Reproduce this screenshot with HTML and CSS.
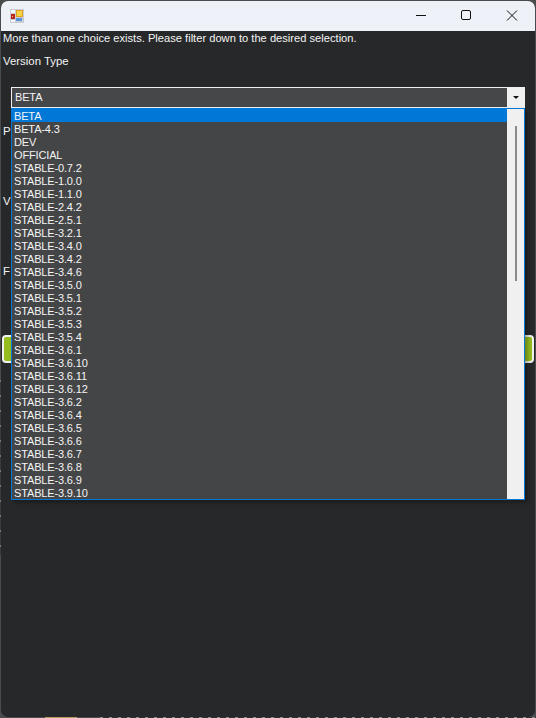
FILE: index.html
```html
<!DOCTYPE html>
<html lang="en">
  <head>
    <meta charset="UTF-8" />
    <title>Choose Version</title>
    <link rel="stylesheet" href="styles.css">
  </head>
  <body>
    <div class="window">
      <header class="title-bar">
        <svg class="app-icon" width="14" height="14" viewBox="0 0 14 14">
          <rect x="0" y="0" width="14" height="14" fill="#c9ccd3"/>
          <rect x="1" y="1" width="4" height="3" fill="#f6f6f8"/>
          <rect x="1" y="11" width="4" height="2" fill="#f6f6f8"/>
          <rect x="1" y="5" width="4" height="5" fill="#b8261d"/>
          <rect x="2" y="7" width="1" height="1" fill="#f0c0a0"/>
          <rect x="6" y="1" width="7" height="7" fill="#e0a020"/>
          <rect x="7" y="2" width="5" height="5" fill="#f8d248"/>
          <rect x="6" y="9" width="6" height="3" fill="#5a94da"/>
        </svg>
        <div class="window-controls">
          <svg class="control" width="46" height="30" viewBox="0 0 46 30"><path d="M19 14.5h10" stroke="#111" fill="none"/></svg>
          <svg class="control" width="46" height="30" viewBox="0 0 46 30"><rect x="18.5" y="9.5" width="9" height="9" rx="1.5" stroke="#111" fill="none"/></svg>
          <svg class="control" width="46" height="30" viewBox="0 0 46 30"><path d="M18 9.5l10 10M28 9.5l-10 10" stroke="#111" fill="none"/></svg>
        </div>
      </header>

      <main class="content">
        <p class="message">More than one choice exists. Please filter down to the desired selection.</p>
        <label class="field-label version-type">Version Type</label>

        <div class="combo">
          <span class="combo-value">BETA</span>
          <span class="combo-button"><span class="combo-arrow"></span></span>
        </div>

        <label class="field-label platform">P</label>
        <label class="field-label vehicle">V</label>
        <label class="field-label firmware">F</label>
        <div class="select-button"></div>

        <div class="dropdown">
          <ul class="dropdown-list">
            <li class="selected">BETA</li>
            <li>BETA-4.3</li>
            <li>DEV</li>
            <li>OFFICIAL</li>
            <li>STABLE-0.7.2</li>
            <li>STABLE-1.0.0</li>
            <li>STABLE-1.1.0</li>
            <li>STABLE-2.4.2</li>
            <li>STABLE-2.5.1</li>
            <li>STABLE-3.2.1</li>
            <li>STABLE-3.4.0</li>
            <li>STABLE-3.4.2</li>
            <li>STABLE-3.4.6</li>
            <li>STABLE-3.5.0</li>
            <li>STABLE-3.5.1</li>
            <li>STABLE-3.5.2</li>
            <li>STABLE-3.5.3</li>
            <li>STABLE-3.5.4</li>
            <li>STABLE-3.6.1</li>
            <li>STABLE-3.6.10</li>
            <li>STABLE-3.6.11</li>
            <li>STABLE-3.6.12</li>
            <li>STABLE-3.6.2</li>
            <li>STABLE-3.6.4</li>
            <li>STABLE-3.6.5</li>
            <li>STABLE-3.6.6</li>
            <li>STABLE-3.6.7</li>
            <li>STABLE-3.6.8</li>
            <li>STABLE-3.6.9</li>
            <li>STABLE-3.9.10</li>
          </ul>
          <div class="scrollbar"><div class="scroll-thumb"></div></div>
        </div>
      </main>
    </div>
  </body>
</html>
```

FILE: styles.css
```css
html,
body {
  padding: 0;
  margin: 0;
  height: 718px;
  overflow: hidden;
}

/* the desktop peeks out round the window edge */
html {
  background:
    repeating-linear-gradient(90deg, #8d8e90 0 3px, #2f3032 3px 9px) 100px 717px / 436px 1px no-repeat,
    linear-gradient(#b59a66, #b59a66) 45px 717px / 32px 1px no-repeat,
    repeating-linear-gradient(180deg, #77787a 0 2px, #3a3b3d 2px 15px) 0 380px / 1px 175px no-repeat,
    #4a4b4d;
}

body {
  padding: 1px 1px 1px 1px;
  box-sizing: border-box;
}

.window {
  height: 716px;
  display: flex;
  flex-direction: column;
  background-color: #27282a;
  border-radius: 7px;
  overflow: hidden;
  font-family: "Liberation Sans", Arial, sans-serif;
  font-size: 11px;
  letter-spacing: -0.15px;
  color: #f4f4f4;
}

.title-bar {
  height: 30px;
  flex: none;
  display: flex;
  align-items: center;
  justify-content: space-between;
  background-color: #eff1f8;
}

.app-icon {
  margin-left: 9px;
}

.window-controls {
  display: flex;
}

.control {
  display: block;
}

.content {
  flex: 1;
  position: relative;
  padding: 0 2px;
}

.message {
  margin: 0;
  line-height: 14px;
  font-size: 11.15px;
  letter-spacing: 0;
}

.field-label {
  display: block;
  line-height: 14px;
  font-size: 11.4px;
  letter-spacing: 0;
}

.version-type {
  margin-top: 9px;
}

.combo {
  height: 19px;
  margin: 19px 8px 0 8px;
  display: flex;
  border: 1px solid #f0f0f0;
  background-color: #464749;
}

.combo-value {
  flex: 1;
  padding-left: 3px;
  line-height: 19px;
}

.combo-button {
  width: 17px;
  display: flex;
  align-items: center;
  justify-content: center;
  background-color: #f0f0f0;
}

.combo-arrow {
  width: 0;
  height: 0;
  border-left: 3px solid transparent;
  border-right: 3px solid transparent;
  border-top: 3px solid #111;
}

.platform {
  margin-top: 16px;
}

.vehicle {
  margin-top: 56px;
}

.firmware {
  margin-top: 56px;
}

.select-button {
  box-sizing: border-box;
  height: 28px;
  margin: 57px -1px 0 -1px;
  border: 2px solid #f0f0f0;
  border-radius: 4px;
  background-color: #95bd1f;
}

.dropdown {
  position: absolute;
  top: 77px;
  left: 10px;
  width: 512px;
  height: 390px;
  display: flex;
  border: 1px solid #0078d7;
  background-color: #444547;
  box-shadow: 3px 3px 4px rgba(0, 0, 0, 0.3);
}

.dropdown-list {
  list-style-type: none;
  margin: 0;
  padding: 0;
  flex: 1;
  overflow: hidden;
}

.dropdown-list li {
  height: 13px;
  line-height: 14px;
  padding-left: 2px;
}

.dropdown-list .selected {
  background-color: #0078d7;
}

.scrollbar {
  width: 17px;
  flex: none;
  background-color: #f0f0f0;
}

.scroll-thumb {
  width: 2px;
  height: 155px;
  margin: 17px 0 0 8px;
  background-color: #8a8a8a;
}
```
